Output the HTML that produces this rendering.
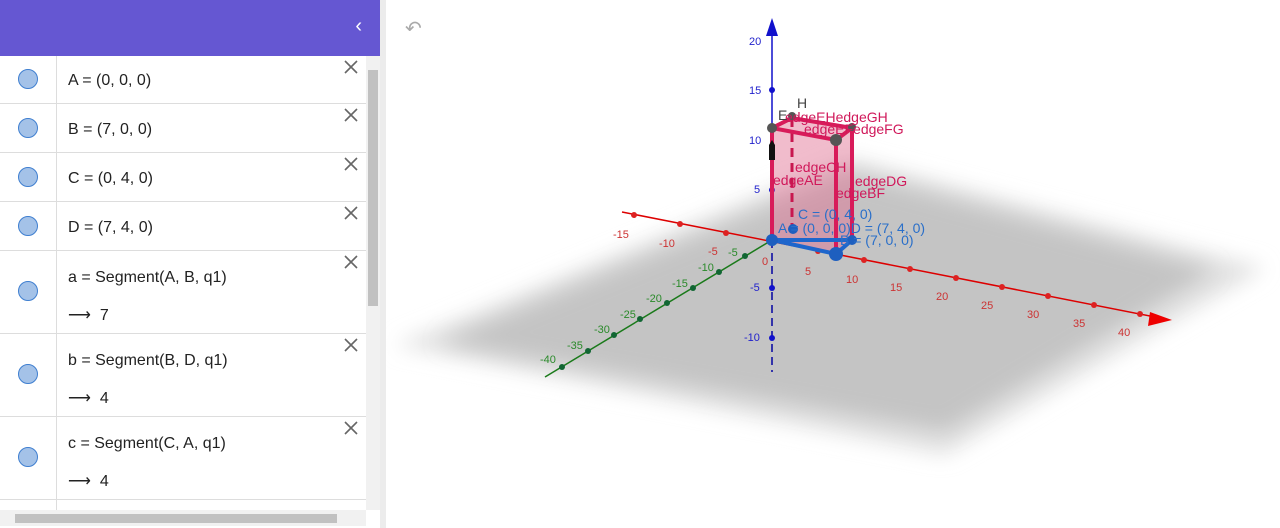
<!DOCTYPE html>
<html><head><meta charset="utf-8"><style>
body{margin:0;width:1280px;height:528px;overflow:hidden;font-family:"Liberation Sans",sans-serif;background:#fff;position:relative}
#left{position:absolute;left:0;top:0;width:380px;height:528px;background:#fff}
#hdr{position:absolute;left:0;top:0;width:380px;height:56px;background:#6557d2}
#hdr span{position:absolute;right:18px;top:15px;color:#fff;font-size:20px}
.row{position:absolute;left:0;width:366px;border-bottom:1px solid #ddd}
.row .dot{position:absolute;left:18px;width:18px;height:18px;border-radius:50%;background:#a4c2e8;border:1px solid #3f7fd0}
.row .sep{position:absolute;left:56px;top:0;bottom:0;border-left:1px solid #ddd}
.row .t{position:absolute;left:68px;font-size:16px;color:#222}
.row .x{position:absolute;right:8px;top:4px;width:14px;height:14px}
#vsb{position:absolute;left:366px;top:56px;width:14px;height:454px;background:#f1f1f1}
#vth{position:absolute;left:368px;top:70px;width:10px;height:236px;background:#c1c1c1}
#hsb{position:absolute;left:0;top:510px;width:366px;height:16px;background:#f1f1f1}
#hth{position:absolute;left:15px;top:514px;width:322px;height:9px;background:#c1c1c1}
#border{position:absolute;left:380px;top:0;width:6px;height:528px;background:#ececec}
</style></head><body>
<svg style="position:absolute;left:0;top:0" width="1280" height="528">
<defs><filter id="b" x="-20%" y="-20%" width="140%" height="140%"><feGaussianBlur stdDeviation="10"/></filter></defs>
<polygon points="395,345 850,158 1265,268 945,455" fill="#e2e2e2" filter="url(#b)"/>
<polygon points="440,342 850,172 1215,270 945,432" fill="#c4c4c4" filter="url(#b)"/>
<text x="405" y="35" font-size="20" fill="#aaa">↶</text>
<line x1="622" y1="212" x2="1160" y2="318" stroke="#d00" stroke-width="1.5"/>
<polygon points="1172,320 1150,312 1148,326" fill="#e00"/>
<g fill="#d22">
<circle cx="634" cy="215" r="3"/><circle cx="680" cy="224" r="3"/><circle cx="726" cy="233" r="3"/><circle cx="818" cy="251" r="3"/><circle cx="864" cy="260" r="3"/><circle cx="910" cy="269" r="3"/><circle cx="956" cy="278" r="3"/><circle cx="1002" cy="287" r="3"/><circle cx="1048" cy="296" r="3"/><circle cx="1094" cy="305" r="3"/><circle cx="1140" cy="314" r="3"/>
</g>
<g fill="#c33" font-size="11">
<text x="613" y="238">-15</text><text x="659" y="247">-10</text><text x="708" y="255">-5</text><text x="762" y="265">0</text><text x="805" y="275">5</text><text x="846" y="283">10</text><text x="890" y="291">15</text><text x="936" y="300">20</text><text x="981" y="309">25</text><text x="1027" y="318">30</text><text x="1073" y="327">35</text><text x="1118" y="336">40</text>
</g>
<line x1="545" y1="377" x2="772" y2="240" stroke="#1a7a1a" stroke-width="1.5"/>
<g fill="#163">
<circle cx="745" cy="256" r="3"/><circle cx="719" cy="272" r="3"/><circle cx="693" cy="288" r="3"/><circle cx="667" cy="303" r="3"/><circle cx="640" cy="319" r="3"/><circle cx="614" cy="335" r="3"/><circle cx="588" cy="351" r="3"/><circle cx="562" cy="367" r="3"/>
</g>
<g fill="#2a8a2a" font-size="11">
<text x="728" y="256">-5</text><text x="698" y="271">-10</text><text x="672" y="287">-15</text><text x="646" y="302">-20</text><text x="620" y="318">-25</text><text x="594" y="333">-30</text><text x="567" y="349">-35</text><text x="540" y="363">-40</text>
</g>
<line x1="772" y1="30" x2="772" y2="240" stroke="#11c" stroke-width="1.5"/>
<line x1="772" y1="240" x2="772" y2="372" stroke="#33a" stroke-width="2" stroke-dasharray="8,5"/>
<polygon points="772,18 766,36 778,36" fill="#11c"/>
<g fill="#11c"><circle cx="772" cy="90" r="3"/><circle cx="772" cy="190" r="3"/><circle cx="772" cy="288" r="3"/><circle cx="772" cy="338" r="3"/></g>
<g fill="#22c" font-size="11"><text x="749" y="45">20</text><text x="749" y="94">15</text><text x="749" y="144">10</text><text x="754" y="193">5</text><text x="750" y="291">-5</text><text x="744" y="341">-10</text></g>
<polygon points="772,128 792,118 852,128 852,240 836,254 772,240" fill="#e06a8f" fill-opacity="0.45"/>
<line x1="792" y1="118" x2="792" y2="228" stroke="#c8174f" stroke-width="3" stroke-dasharray="9,6"/>
<g stroke="#d81b5a" stroke-width="4" fill="none">
<polyline points="772,240 772,128 792,118 852,128 836,140 772,128"/>
<line x1="836" y1="140" x2="836" y2="254"/><line x1="852" y1="128" x2="852" y2="240"/>
</g>
<polygon points="772,240 836,254 852,240" fill="none" stroke="#1e66cc" stroke-width="4"/>
<polygon points="769,160 775,160 775,145 772,140 769,145" fill="#111"/>
<g fill="#555"><circle cx="772" cy="128" r="5"/><circle cx="836" cy="140" r="6"/><circle cx="792" cy="116" r="4"/><circle cx="852" cy="127" r="4"/></g>
<g fill="#1e5fbf"><circle cx="772" cy="240" r="6"/><circle cx="836" cy="254" r="7"/><circle cx="852" cy="240" r="5"/><circle cx="793" cy="229" r="5"/></g>
<g fill="#d0185a" font-size="14">
<text x="785" y="122">edgeEHedgeGH</text><text x="804" y="134">edgeEFedgeFG</text><text x="795" y="172">edgeCH</text><text x="773" y="185">edgeAE</text><text x="855" y="186">edgeDG</text><text x="836" y="198">edgeBF</text>
</g>
<g fill="#444" font-size="14"><text x="797" y="108">H</text><text x="778" y="120">E</text></g>
<g fill="#2a6fc9" font-size="14"><text x="798" y="219">C = (0, 4, 0)</text><text x="778" y="233">A = (0, 0, 0)D = (7, 4, 0)</text><text x="840" y="245">B = (7, 0, 0)</text></g>
</svg>
<div id="left">
<div id="hdr"><span>&lsaquo;</span></div>
<div class="row" style="top:56px;height:47px"><div class="dot" style="top:13px"></div><div class="sep"></div><div class="t" style="top:16px">A = (0, 0, 0)</div><svg class="x" viewBox="0 0 14 14"><path d="M1 1L13 13M13 1L1 13" stroke="#666" stroke-width="1.6"/></svg></div>
<div class="row" style="top:104px;height:48px"><div class="dot" style="top:14px"></div><div class="sep"></div><div class="t" style="top:17px">B = (7, 0, 0)</div><svg class="x" viewBox="0 0 14 14"><path d="M1 1L13 13M13 1L1 13" stroke="#666" stroke-width="1.6"/></svg></div>
<div class="row" style="top:153px;height:48px"><div class="dot" style="top:14px"></div><div class="sep"></div><div class="t" style="top:17px">C = (0, 4, 0)</div><svg class="x" viewBox="0 0 14 14"><path d="M1 1L13 13M13 1L1 13" stroke="#666" stroke-width="1.6"/></svg></div>
<div class="row" style="top:202px;height:48px"><div class="dot" style="top:14px"></div><div class="sep"></div><div class="t" style="top:17px">D = (7, 4, 0)</div><svg class="x" viewBox="0 0 14 14"><path d="M1 1L13 13M13 1L1 13" stroke="#666" stroke-width="1.6"/></svg></div>
<div class="row" style="top:251px;height:82px"><div class="dot" style="top:30px"></div><div class="sep"></div><div class="t" style="top:18px">a = Segment(A, B, q1)</div><div class="t" style="top:54px">⟶&nbsp; 7</div><svg class="x" viewBox="0 0 14 14"><path d="M1 1L13 13M13 1L1 13" stroke="#666" stroke-width="1.6"/></svg></div>
<div class="row" style="top:334px;height:82px"><div class="dot" style="top:30px"></div><div class="sep"></div><div class="t" style="top:18px">b = Segment(B, D, q1)</div><div class="t" style="top:54px">⟶&nbsp; 4</div><svg class="x" viewBox="0 0 14 14"><path d="M1 1L13 13M13 1L1 13" stroke="#666" stroke-width="1.6"/></svg></div>
<div class="row" style="top:417px;height:82px"><div class="dot" style="top:30px"></div><div class="sep"></div><div class="t" style="top:18px">c = Segment(C, A, q1)</div><div class="t" style="top:54px">⟶&nbsp; 4</div><svg class="x" viewBox="0 0 14 14"><path d="M1 1L13 13M13 1L1 13" stroke="#666" stroke-width="1.6"/></svg></div>
<div class="row" style="top:500px;height:20px;border:none"><div class="sep"></div></div>
<div id="vsb"></div><div id="vth"></div>
<div id="hsb"></div><div id="hth"></div>
</div>
<div id="border"></div>
</body></html>
